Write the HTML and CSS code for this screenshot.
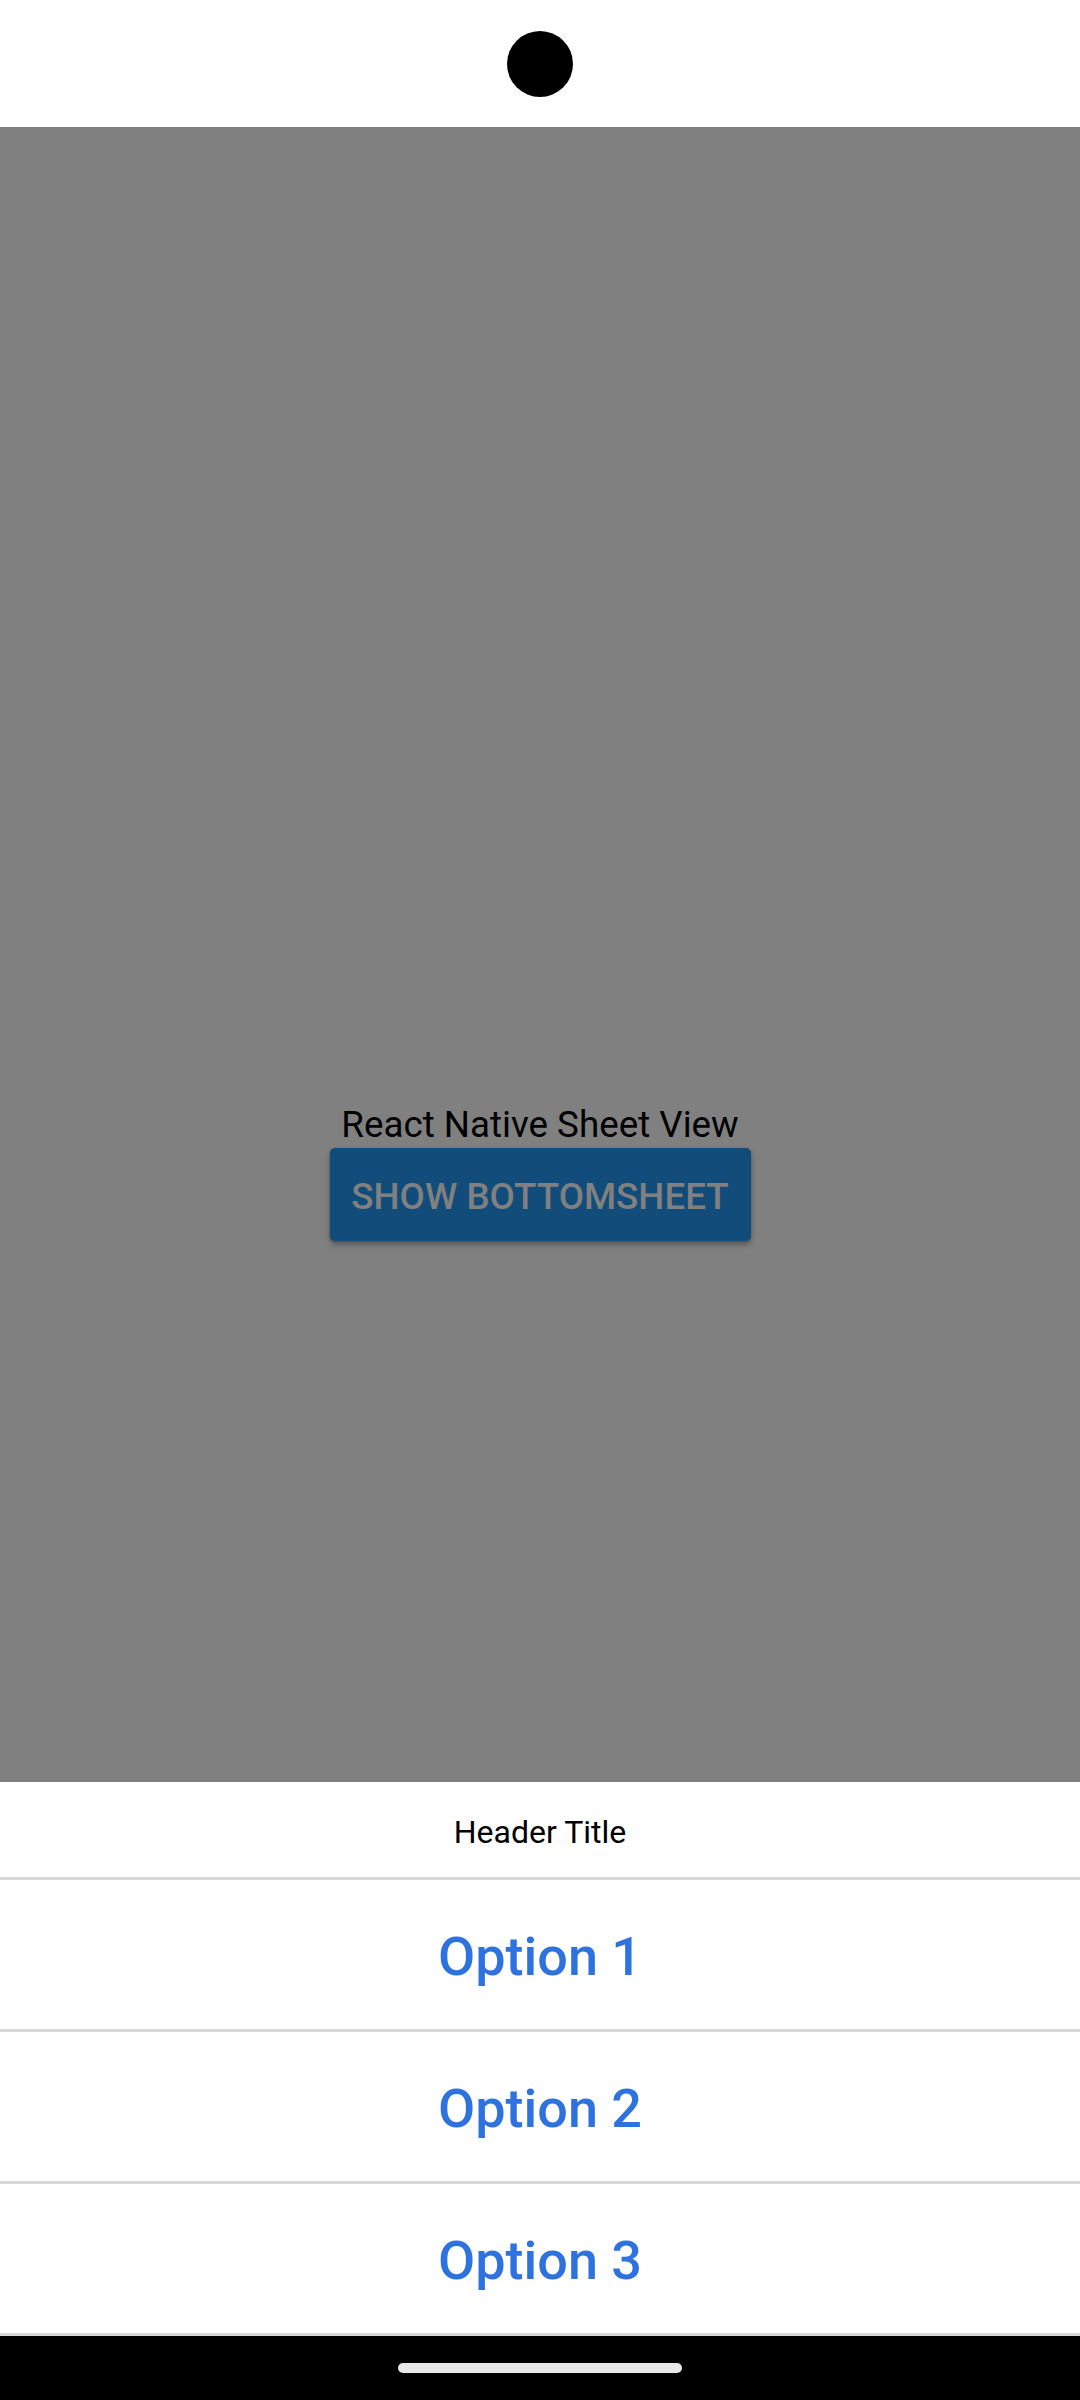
FILE: index.html
```html
<!DOCTYPE html>
<html lang="en">
<head>
<meta charset="utf-8">
<title>React Native Sheet View</title>
<link rel="stylesheet" href="styles.css">
</head>
<body>
<div class="screen">
  <div class="status-bar">
    <div class="camera"></div>
  </div>
  <main class="content">
    <div class="intro">React Native Sheet View</div>
    <button class="show-btn">Show Bottomsheet</button>
  </main>
  <section class="sheet">
    <div class="sheet-header">Header Title</div>
    <div class="sheet-option">Option 1</div>
    <div class="sheet-option">Option 2</div>
    <div class="sheet-option">Option 3</div>
  </section>
  <div class="nav-bar">
    <div class="home-pill"></div>
  </div>
</div>
</body>
</html>
```

FILE: styles.css
```css
html, body {
  margin: 0;
  padding: 0;
  background: #000;
}

.screen {
  width: 1080px;
  height: 2400px;
  display: flex;
  flex-direction: column;
  font-family: Roboto, "Noto Sans", "Liberation Sans", sans-serif;
  overflow: hidden;
}

.status-bar {
  height: 127px;
  background: #ffffff;
  display: flex;
  justify-content: center;
  align-items: flex-start;
  padding-top: 31px;
  box-sizing: border-box;
  flex: none;
}

.camera {
  width: 66px;
  height: 66px;
  border-radius: 50%;
  background: #000;
}

.content {
  flex: 1;
  background: #808080;
  display: flex;
  flex-direction: column;
  align-items: center;
  padding-top: 976px;
  box-sizing: border-box;
}

.intro {
  font-size: 36.75px;
  color: #000;
  line-height: 43px;
  margin-bottom: 2px;
}

.show-btn {
  font-family: Roboto, "Noto Sans", "Liberation Sans", sans-serif;
  font-weight: 500;
  font-size: 36.75px;
  letter-spacing: 0;
  text-transform: uppercase;
  color: #808080;
  background: #114c7b;
  border: none;
  border-radius: 5px;
  height: 93px;
  width: 421px;
  padding: 3px 0 0;
  box-shadow: 0 4px 6px rgba(0, 0, 0, 0.28), 0 1px 3px rgba(0, 0, 0, 0.2);
}

.sheet {
  background: #ffffff;
  flex: none;
  display: flex;
  flex-direction: column;
}

.sheet-header {
  height: 91px;
  padding-top: 4px;
  border-bottom: 3px solid #d8d8d8;
  display: flex;
  align-items: center;
  justify-content: center;
  font-size: 32px;
  color: #000;
}

.sheet-option {
  height: 152px;
  box-sizing: border-box;
  padding-top: 4px;
  border-bottom: 3px solid #d8d8d8;
  display: flex;
  align-items: center;
  justify-content: center;
  font-size: 54px;
  font-weight: 500;
  color: #2e72e0;
}

.nav-bar {
  height: 64px;
  background: #000;
  flex: none;
  display: flex;
  justify-content: center;
  padding-top: 27px;
  box-sizing: border-box;
}

.home-pill {
  width: 284px;
  height: 10px;
  border-radius: 5px;
  background: #e8e8e8;
}
```
